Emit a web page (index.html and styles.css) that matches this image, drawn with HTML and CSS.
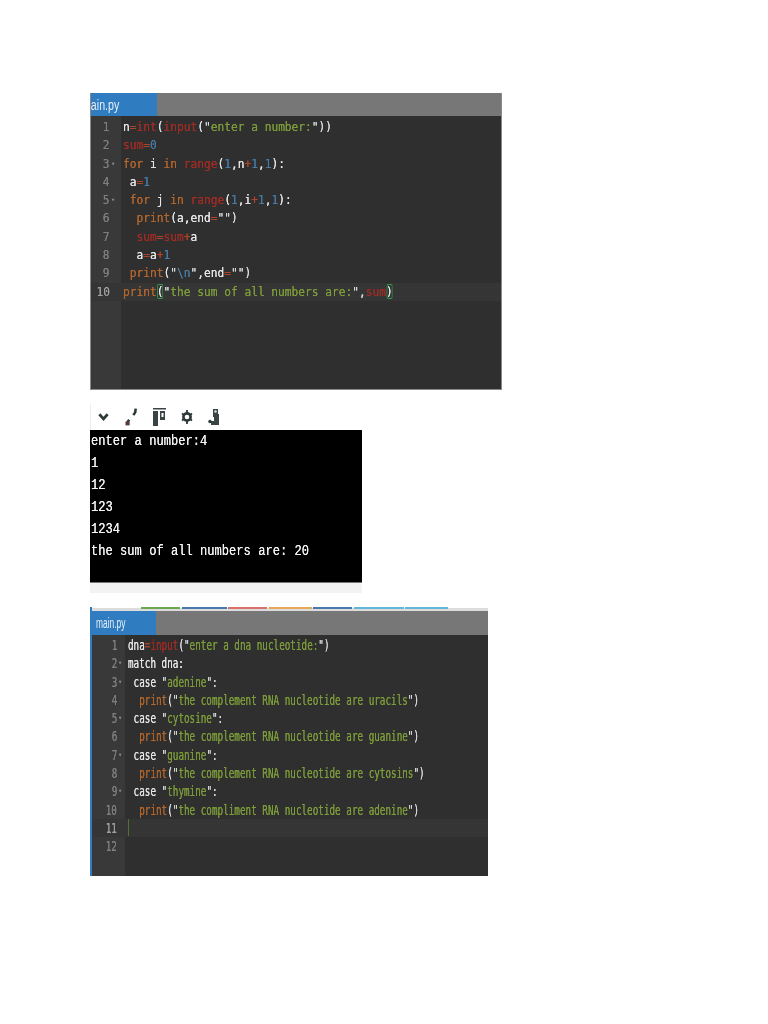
FILE: index.html
```html
<!DOCTYPE html>
<html lang="en">
<head>
<meta charset="utf-8">
<title>main.py</title>
<link rel="stylesheet" href="styles.css">
</head>
<body>
<main class="page">
  <section class="editor editor-a">
    <div class="tabbar"><div class="tab"><span class="tab-label">main.py</span></div></div>
    <div class="code">
      <div class="line"><span class="num"><b>1</b></span><span class="fold"></span><span class="src"><i class="w">n</i><i class="o">=</i><i class="r">int</i><i class="w">(</i><i class="r">input</i><i class="w">(</i><i class="q">"</i><i class="g">enter a number:</i><i class="q">"))</i></span></div>
      <div class="line"><span class="num"><b>2</b></span><span class="fold"></span><span class="src"><i class="r">sum</i><i class="o">=</i><i class="b">0</i></span></div>
      <div class="line"><span class="num"><b>3</b></span><span class="fold">▾</span><span class="src"><i class="k">for</i> <i class="w">i</i> <i class="k">in</i> <i class="r">range</i><i class="w">(</i><i class="b">1</i><i class="w">,n</i><i class="o">+</i><i class="b">1</i><i class="w">,</i><i class="b">1</i><i class="w">):</i></span></div>
      <div class="line"><span class="num"><b>4</b></span><span class="fold"></span><span class="src"> <i class="w">a</i><i class="o">=</i><i class="b">1</i></span></div>
      <div class="line"><span class="num"><b>5</b></span><span class="fold">▾</span><span class="src"> <i class="k">for</i> <i class="w">j</i> <i class="k">in</i> <i class="r">range</i><i class="w">(</i><i class="b">1</i><i class="w">,i</i><i class="o">+</i><i class="b">1</i><i class="w">,</i><i class="b">1</i><i class="w">):</i></span></div>
      <div class="line"><span class="num"><b>6</b></span><span class="fold"></span><span class="src">  <i class="k">print</i><i class="w">(a,end</i><i class="o">=</i><i class="q">"")</i></span></div>
      <div class="line"><span class="num"><b>7</b></span><span class="fold"></span><span class="src">  <i class="r">sum</i><i class="o">=</i><i class="r">sum</i><i class="o">+</i><i class="w">a</i></span></div>
      <div class="line"><span class="num"><b>8</b></span><span class="fold"></span><span class="src">  <i class="w">a</i><i class="o">=</i><i class="w">a</i><i class="o">+</i><i class="b">1</i></span></div>
      <div class="line"><span class="num"><b>9</b></span><span class="fold"></span><span class="src"> <i class="k">print</i><i class="w">(</i><i class="q">"</i><i class="b">\n</i><i class="q">"</i><i class="w">,end</i><i class="o">=</i><i class="q">"")</i></span></div>
      <div class="line active"><span class="num"><b>10</b></span><span class="fold"></span><span class="src"><i class="k">print</i><i class="w match">(</i><i class="q">"</i><i class="g">the sum of all numbers are:</i><i class="q">",</i><i class="r">sum</i><i class="w match">)</i></span></div>
    </div>
  </section>

  <div class="toolbar">
    <svg class="tool tool-chevron" viewBox="0 0 12 10"><path d="M1.500 2 6 7l4.500-5" fill="none" stroke="#2e3a3a" stroke-width="3"/></svg>
    <svg class="tool tool-expand" viewBox="0 0 14 18"><path d="M11.500 0l-.5 4-2 3M4.500 12l-2 3" fill="none" stroke="#2e3a3a" stroke-width="2.800"/><path d="M0.500 18v-4h4.500v4z" fill="#5a3a34"/></svg>
    <svg class="tool tool-panel" viewBox="0 0 13 18"><path d="M0 0h13v1.500H0zM0 3h5v15H0zM7 3h5v9H7z" fill="#3a4444"/><path d="M8.500 5h2v4h-2z" fill="#fff"/></svg>
    <svg class="tool tool-gear" viewBox="0 0 12 16"><circle cx="6" cy="8" r="3.600" fill="none" stroke="#2e3a3a" stroke-width="2.600"/><path d="M6 1v3M6 12v3M1 4.500l2 1.500M11 4.500 9 6M1 11.500 3 10M11 11.500 9 10" stroke="#2e3a3a" stroke-width="1.800"/></svg>
    <svg class="tool tool-person" viewBox="0 0 12 18"><path d="M5 1h5v5h1v11H3v-4h3V9H5z" fill="#3a4444"/><circle cx="7.500" cy="3.500" r="1.300" fill="#ddd"/><circle cx="2" cy="13.500" r="1.700" fill="#2e3a3a"/></svg>
  </div>
  <section class="console">
    <div class="out"><span class="out-text">enter a number:4</span></div>
    <div class="out"><span class="out-text">1</span></div>
    <div class="out"><span class="out-text">12</span></div>
    <div class="out"><span class="out-text">123</span></div>
    <div class="out"><span class="out-text">1234</span></div>
    <div class="out"><span class="out-text">the sum of all numbers are: 20</span></div>
  </section>
  <div class="console-foot"></div>

  <section class="editor editor-b">
    <div class="stripe">
      <span class="seg seg-green"></span><span class="seg seg-blue"></span><span class="seg seg-red"></span><span class="seg seg-orange"></span><span class="seg seg-navy"></span><span class="seg seg-cyan"></span><span class="seg seg-sky"></span>
    </div>
    <div class="tabbar"><div class="tab"><span class="tab-label">main.py</span></div></div>
    <div class="code">
      <div class="line"><span class="num"><b>1</b></span><span class="fold"></span><span class="src"><i class="w">dna</i><i class="o">=</i><i class="r">input</i><i class="w">(</i><i class="q">"</i><i class="g">enter a dna nucleotide:</i><i class="q">")</i></span></div>
      <div class="line"><span class="num"><b>2</b></span><span class="fold">▾</span><span class="src"><i class="w">match dna:</i></span></div>
      <div class="line"><span class="num"><b>3</b></span><span class="fold">▾</span><span class="src"> <i class="w">case</i> <i class="q">"</i><i class="g">adenine</i><i class="q">":</i></span></div>
      <div class="line"><span class="num"><b>4</b></span><span class="fold"></span><span class="src">  <i class="k">print</i><i class="w">(</i><i class="q">"</i><i class="g">the complement RNA nucleotide are uracils</i><i class="q">")</i></span></div>
      <div class="line"><span class="num"><b>5</b></span><span class="fold">▾</span><span class="src"> <i class="w">case</i> <i class="q">"</i><i class="g">cytosine</i><i class="q">":</i></span></div>
      <div class="line"><span class="num"><b>6</b></span><span class="fold"></span><span class="src">  <i class="k">print</i><i class="w">(</i><i class="q">"</i><i class="g">the complement RNA nucleotide are guanine</i><i class="q">")</i></span></div>
      <div class="line"><span class="num"><b>7</b></span><span class="fold">▾</span><span class="src"> <i class="w">case</i> <i class="q">"</i><i class="g">guanine</i><i class="q">":</i></span></div>
      <div class="line"><span class="num"><b>8</b></span><span class="fold"></span><span class="src">  <i class="k">print</i><i class="w">(</i><i class="q">"</i><i class="g">the complement RNA nucleotide are cytosins</i><i class="q">")</i></span></div>
      <div class="line"><span class="num"><b>9</b></span><span class="fold">▾</span><span class="src"> <i class="w">case</i> <i class="q">"</i><i class="g">thymine</i><i class="q">":</i></span></div>
      <div class="line"><span class="num"><b>10</b></span><span class="fold"></span><span class="src">  <i class="k">print</i><i class="w">(</i><i class="q">"</i><i class="g">the compliment RNA nucleotide are adenine</i><i class="q">")</i></span></div>
      <div class="line active"><span class="num"><b>11</b></span><span class="fold"></span><span class="src"><i class="caret"></i></span></div>
      <div class="line"><span class="num"><b>12</b></span><span class="fold"></span><span class="src"></span></div>
    </div>
  </section>
</main>
</body>
</html>
```
FILE: styles.css
```css
* { box-sizing: border-box; }
html, body { margin: 0; background: #fff; }
body { height: 1024px; overflow: hidden; }
.page {
  display: flex;
  flex-direction: column;
  align-items: flex-start;
  padding: 93px 0 0 90px;
}
i { font-style: normal; }
b { font-weight: inherit; }

/* editor panels */
.editor {
  display: flex;
  flex-direction: column;
  overflow: hidden;
  font-family: "DejaVu Sans Mono", monospace;
}
.editor-a {
  --gutter: 30px;
  --pad: 2px;
  --num: 19px;
  --stretch: 0.896;
  --size: 12.500px;
  width: 412px;
  height: 297px;
  border: solid #8a8a8a;
  border-width: 0 1px 1px 1px;
}
.editor-b {
  --gutter: 33px;
  --pad: 3px;
  --num: 25px;
  --stretch: 0.664;
  --size: 14px;
  width: 398px;
  height: 269px;
  margin-top: 14px;
  border-left: 2px solid #2f7cc0;
}
.stripe {
  display: flex;
  flex: none;
  gap: 1.500px;
  height: 4px;
  padding-left: 49px;
  background: linear-gradient(to bottom, #fff 1.500px, #dcdcdc 1.500px);
}
.seg { height: 1.500px; }
.seg-green { width: 39px; background: #6aa84f; }
.seg-blue { width: 45px; background: #4a78a8; }
.seg-red { width: 39px; background: #d9706a; }
.seg-orange { width: 43px; background: #e8a85c; }
.seg-navy { width: 39px; background: #4a78a8; }
.seg-cyan { width: 50px; background: #62b6d8; }
.seg-sky { width: 43px; background: #62b6d8; }

.tabbar {
  flex: none;
  display: flex;
  height: 23px;
  background: #777;
}
.editor-b .tabbar { height: 24px; }
.tab {
  display: flex;
  align-items: center;
  overflow: hidden;
  background: #2f7cc0;
  color: #e6eef6;
  font: 14px/1 "Liberation Sans", sans-serif;
}
.editor-a .tab { width: 66px; }
.editor-b .tab { width: 64px; }
.tab-label {
  display: inline-block;
  transform-origin: left center;
  filter: blur(0.35px);
}
.editor-a .tab-label { margin-left: -9px; transform: scaleX(0.76); }
.editor-b .tab-label { margin-left: 4px; transform: scaleX(0.6); }

.code {
  flex: 1;
  padding-top: 2px;
  background: linear-gradient(to right, #393939 var(--gutter), #2f2f2f var(--gutter));
  filter: blur(0.4px);
}
.editor-b .code { padding-top: 1px; }
.line {
  display: flex;
  height: 18.300px;
  font-size: var(--size);
  line-height: 18.300px;
  white-space: pre;
}
.active { background: #353535; }
.active .num { color: #a0a0a0; }
.num {
  flex: none;
  width: var(--num);
  text-align: right;
  color: #7e7e7e;
  text-shadow: 0 0 0.6px currentColor;
}
.num b {
  display: inline-block;
  transform: scaleX(var(--stretch));
  transform-origin: right center;
}
.fold {
  flex: none;
  width: calc(var(--gutter) - var(--num) + var(--pad));
  padding-left: 1px;
  font-size: 7px;
  color: #8c8c8c;
}
.src {
  display: inline-block;
  transform: scaleX(var(--stretch));
  transform-origin: left center;
  text-shadow: 0 0 0.6px currentColor;
}
.w { color: #e6e6e6; }
.q { color: #d8dcdc; }
.k { color: #b2662c; }
.r { color: #a02c26; }
.o { color: #ab452a; }
.g { color: #7c9b3a; }
.b { color: #477aa4; }
.match { box-shadow: inset 0 0 0 1px #2f9a4c; border-radius: 2px; }
.caret {
  display: inline-block;
  width: 1px;
  height: 17px;
  vertical-align: top;
  background: #5f8f3a;
}

/* run toolbar + console */
.toolbar {
  display: flex;
  align-items: center;
  height: 26px;
  margin-top: 14px;
  padding-left: 7px;
  border-left: 1px solid #eee;
  width: 272px;
}
.tool { flex: none; filter: blur(0.3px); }
.tool-chevron { width: 11px; height: 10px; }
.tool-expand { width: 13px; height: 18px; margin-left: 16px; }
.tool-panel { width: 13px; height: 18px; margin-left: 15px; }
.tool-gear { width: 12px; height: 16px; margin-left: 15px; }
.tool-person { width: 12px; height: 18px; margin-left: 15px; }

.console {
  width: 272px;
  height: 153px;
  background: #000;
  border-bottom: 1px solid #777;
  color: #f4f4f4;
  font: 14px/22px "Liberation Mono", monospace;
  filter: blur(0.3px);
}
.out { height: 22px; padding-left: 1px; white-space: pre; }
.out-text {
  display: inline-block;
  transform: scaleX(0.865);
  transform-origin: left center;
  text-shadow: 0 0 0.5px currentColor;
}
.console-foot {
  width: 272px;
  height: 10px;
  background: #f3f3f3;
}
```
